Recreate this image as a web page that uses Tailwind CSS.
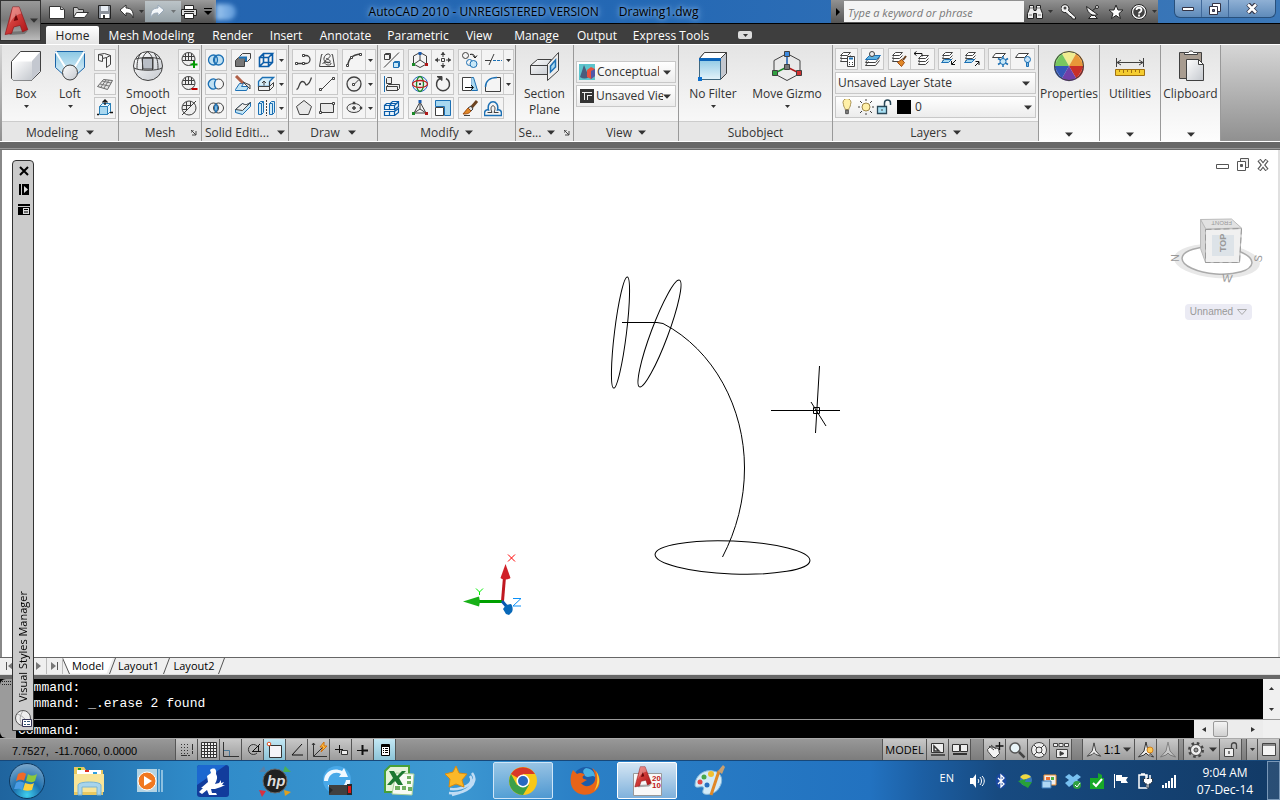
<!DOCTYPE html>
<html lang="en">
<head>
<meta charset="utf-8">
<title>AutoCAD 2010 - Drawing1.dwg</title>
<script src="https://cdn.jsdelivr.net/npm/@tailwindcss/browser@4"></script>
</head>
<body class="relative flex min-h-screen flex-col overflow-x-hidden bg-[#686868] font-['Open_Sans','Noto_Sans',sans-serif] text-[12px] leading-4 text-[#333]">

<svg class="absolute size-0" aria-hidden="true">
  <defs>
    <linearGradient id="gGlass" x1="0" y1="0" x2="0" y2="1"><stop offset="0" stop-color="#8cc8e4"/><stop offset="1" stop-color="#e4f3fa"/></linearGradient>
    <linearGradient id="gGrey" x1="0" y1="0" x2="1" y2="1"><stop offset="0" stop-color="#fff"/><stop offset="1" stop-color="#c4c8ce"/></linearGradient>
    <linearGradient id="gRed" x1="0" y1="0" x2="1" y2="1"><stop offset="0" stop-color="#f0625a"/><stop offset="1" stop-color="#a90e12"/></linearGradient>
    <radialGradient id="gOrb" cx=".5" cy=".9" r=".9"><stop offset="0" stop-color="#3fd0ee"/><stop offset=".45" stop-color="#1c6fae"/><stop offset="1" stop-color="#7fa9cc"/></radialGradient>
    <symbol id="down" viewBox="0 0 8 5"><path d="M0 .5h8L4 4.800z" fill="#333" stroke="none"/></symbol>
    <symbol id="tiny" viewBox="0 0 5 3"><path d="M0 0h5L2.500 3z" fill="#333" stroke="none"/></symbol>
    <symbol id="launch" viewBox="0 0 6 6"><path d="M0 0l5 5M5 1v4H1M1 0h2M0 1v2" fill="none" stroke="#444"/></symbol>
    <symbol id="sheets" viewBox="0 0 18 18"><path d="M5.500 2.500h7l-3 3h-7zM3.500 6.500l-1 2h7l3-3M3.500 9.500l-1 2h7l3-3" fill="#fff" stroke="#444"/></symbol>
    <symbol id="compass" viewBox="0 0 18 18"><path d="M9 1l2 9 5.500 6-5.500-2L9 12l-2 2-5.500 2L7 10z" fill="#f0f0f0" stroke="#333" stroke-linejoin="round"/></symbol>
    <symbol id="redA" viewBox="0 0 24 28"><path d="M6 24l16-1-3 3-14 1z" fill="#333" opacity=".4"/><path d="M8 1h6l8 21-5 2-2-6-6 1.500-2 6-6 1z" fill="url(#gRed)" stroke="#8d1014" stroke-width=".6"/><path d="M11 7l2 6-4 1z" fill="#6d0709"/><path d="M8 1h6l2 6C11 8 7 12 5 17z" fill="#fff" opacity=".3"/></symbol>
  </defs>
</svg>

<!-- Title bar -->
<header class="relative flex h-6 shrink-0 items-start border-b border-black bg-linear-to-r from-[#2463ae] via-[#2468b4] to-[#3c78b8]">
  <button class="absolute top-0 left-0 z-10 flex h-[41px] w-[41px] items-center border border-[#333] bg-linear-to-b from-[#999] via-[#777] to-[#bbb] pl-[3px]" aria-label="Application menu">
    <svg class="h-8 w-[26px] shrink-0"><use href="#redA"/></svg>
    <svg class="h-[5px] w-2"><use href="#down"/></svg>
  </button>
  <nav class="ml-[41px] flex h-[23px] w-[175px] shrink-0 items-center bg-linear-to-b from-[#9b9b9b] to-[#505050] pl-2 [&>button]:flex [&>button]:items-center" aria-label="Quick access">
    <button class="w-6" aria-label="New"><svg class="h-4 w-4" viewBox="0 0 16 16"><path d="M.500 2.500h11l4 3v9H.500z" fill="#fff" stroke="#333"/><path d="M11.500 2.500v3h3" fill="#ccc" stroke="#333"/></svg></button>
    <button class="w-6" aria-label="Open"><svg class="h-4 w-4" viewBox="0 0 16 16"><path d="M.500 13.500v-10h4l1 2h5v3" fill="#ccc" stroke="#333"/><path d="M.500 13.500l3-5h12l-4 5z" fill="#fff" stroke="#333"/></svg></button>
    <button class="w-[22px]" aria-label="Save"><svg class="h-4 w-4" viewBox="0 0 16 16"><path d="M1.500 1.500h12v13h-12z" fill="#8d939c" stroke="#222"/><path d="M4 2h7v5H4z" fill="#e9eef5"/><path d="M4 10h8v4H4z" fill="#fff"/><path d="M6 11h2v3H6z" fill="#333"/></svg></button>
    <button class="w-[26px]" aria-label="Undo"><svg class="h-4 w-4" viewBox="0 0 16 16"><path d="M1 6l6-5v3c5 0 8 3 7 10-1-4-3-5-7-5v3z" fill="#fff" stroke="#333"/></svg><svg class="ml-1 h-[3px] w-[5px]"><use href="#tiny"/></svg></button>
    <button class="h-[21px] w-9 bg-linear-to-b from-[#bcc4c8] to-[#94a0a6] pl-1" aria-label="Redo"><svg class="h-4 w-4" viewBox="0 0 16 16"><path d="M15 6L9 1v3C4 4 1 7 2 14c1-4 3-5 7-5v3z" fill="#f4f7fa" stroke="#98a8b8"/></svg><svg class="ml-[6px] h-[3px] w-[5px] opacity-50"><use href="#tiny"/></svg></button>
    <button class="w-[23px]" aria-label="Print"><svg class="h-4 w-4" viewBox="0 0 16 16"><path d="M3.500 1.500h9v4h-9z" fill="#fff" stroke="#222"/><path d="M.500 5.500h15v6H.500z" fill="#ddd" stroke="#222"/><path d="M3.500 9.500h9v5h-9z" fill="#fff" stroke="#222"/><path d="M3 7.500h10" stroke="#222"/></svg></button>
    <button aria-label="Customize"><svg class="h-[7px] w-2" viewBox="0 0 8 7"><path d="M0 0h8v1H0zM0 3h8L4 7z"/></svg></button>
  </nav>
  <div class="mt-1 h-4 w-5 shrink-0 rounded-r-full bg-linear-to-r from-[#9bc4ee] to-[#5c98d8] blur-[2px]"></div>
  <h1 class="flex h-[23px] flex-1 items-center justify-center gap-5 whitespace-nowrap pt-px text-[12px] text-black [text-shadow:0_0_4px_#8fbcec,0_0_8px_#8fbcec]"><span>AutoCAD 2010 - UNREGISTERED VERSION</span><span>Drawing1.dwg</span></h1>
  <div class="flex h-[23px] w-[327px] shrink-0 items-center bg-linear-to-b from-[#929292] to-[#555]">
    <button class="flex h-full w-[13px] items-center justify-center" aria-label="Collapse search"><svg class="h-2 w-1" viewBox="0 0 4 8"><path d="M0 0l4 4-4 4z"/></svg></button>
    <input aria-label="Search" class="h-[21px] w-[180px] bg-[#f4f4f4] px-1 pt-[2px] text-[11px] italic placeholder:text-[#777]" placeholder="Type a keyword or phrase">
    <div class="flex flex-1 items-center pl-[3px] [&_svg]:block">
      <button class="w-[15px]" aria-label="Find"><svg class="h-4 w-4" viewBox="0 0 16 16"><path d="M2.500 4.500V1.500h4v3l.500 2h2l.500-2v-3h4v3l2 5v5h-6v-5h-3v5H.500v-5z" fill="#eee" stroke="#222"/><path d="M2 11h3M11 11h3M3 4h3M10 4h3" stroke="#777"/></svg></button>
      <svg class="mx-[6px] h-[3px] w-[5px]"><use href="#tiny"/></svg>
      <button class="w-6 pl-[2px]" aria-label="Subscription"><svg class="h-4 w-4" viewBox="0 0 16 16"><path d="M7.500 6.500l7 6.500v2h-3l-1-2-2-1-3.500-3.500a4 4 0 1 1 2.500-2z" fill="#f4f4f4" stroke="#222"/><circle cx="4" cy="4" r="1.500" fill="#444"/></svg></button>
      <button class="w-[23px] pl-[2px]" aria-label="Communication"><svg class="h-4 w-4" viewBox="0 0 16 16"><path d="M1.500 2.500l11 8c-4 2-10 0-11-8zM7 7l5-4M3.500 14.500h9l-3-3h-3z" fill="#f4f4f4" stroke="#222"/><circle cx="12" cy="3" r="1.500" fill="#fff" stroke="#222"/></svg></button>
      <button class="w-[23px] pl-[2px]" aria-label="Favorites"><svg class="h-4 w-4" viewBox="0 0 16 16"><path d="M8 1l2 5h5l-4 3.500 1.500 5L8 11.500l-4.500 3 1.500-5L1 6h5z" fill="#fff" stroke="#222"/></svg></button>
      <button class="w-[23px] pl-[2px]" aria-label="Help"><svg class="h-4 w-4" viewBox="0 0 16 16"><circle cx="8" cy="8" r="7.500" fill="#fff" stroke="#222"/><circle cx="8" cy="8" r="5.800" fill="#444"/><path d="M5.500 6c0-3 5-3 5 0 0 2-2.500 2-2.500 3.500M8 10.500v2" fill="none" stroke="#fff" stroke-width="1.800"/></svg></button>
      <svg class="h-[3px] w-[5px]"><use href="#tiny"/></svg>
    </div>
  </div>
  <div class="ml-4 mr-1 flex h-[18px] w-[102px] shrink-0 rounded-b-md border border-t-0 border-[#28507c] bg-linear-to-b from-[#8fb0d4] to-[#5f8bba] [&>button]:flex [&>button]:items-center [&>button]:justify-center">
    <button class="w-[27px] border-r border-[#41699a]" aria-label="Minimize"><svg class="h-[6px] w-3" viewBox="0 0 12 6"><path d="M.500 1.500h11v3H.500z" fill="#fff" stroke="#334"/></svg></button>
    <button class="w-[27px] border-r border-[#41699a]" aria-label="Restore"><svg class="h-3 w-3" viewBox="0 0 12 12"><path d="M3.500.500h8v8h-8z" fill="#fff" stroke="#334"/><path d="M.500 3.500h8v8h-8z" fill="#fff" stroke="#334"/><path d="M3.500 6.500h2v2h-2z" fill="#668" stroke="#334"/></svg></button>
    <button class="flex-1" aria-label="Close"><svg class="h-[11px] w-3" viewBox="0 0 12 11"><path d="M2 1l8 9M10 1l-8 9" stroke="#334" stroke-width="4.500"/><path d="M2 1.500l8 8M10 1.500l-8 8" stroke="#fff" stroke-width="2.500"/></svg></button>
  </div>
</header>

<!-- Ribbon tabs -->
<nav class="flex h-5 shrink-0 items-end bg-[#3e3e3e] pl-[46px] text-[12px] text-white [&>a]:flex [&>a]:h-[18px] [&>a]:items-center [&>a]:justify-center [&>a]:pt-[2px] [&>a]:whitespace-nowrap" aria-label="Ribbon tabs">
  <a href="#" class="w-[53px] rounded-t-xs bg-linear-to-b from-white to-[#e4e4e4] text-[#222]">Home</a>
  <a href="#" class="w-[105px]">Mesh Modeling</a>
  <a href="#" class="w-[57px]">Render</a>
  <a href="#" class="w-[50px]">Insert</a>
  <a href="#" class="w-[69px]">Annotate</a>
  <a href="#" class="w-[76px]">Parametric</a>
  <a href="#" class="w-[46px]">View</a>
  <a href="#" class="w-[69px]">Manage</a>
  <a href="#" class="w-[52px]">Output</a>
  <a href="#" class="w-[96px]">Express Tools</a>
  <button class="mb-[5px] ml-[19px] flex h-2 w-[14px] items-center justify-center rounded-xs bg-[#ddd]" aria-label="Minimize ribbon"><svg class="h-[3px] w-[5px]"><use href="#tiny"/></svg></button>
</nav>

<!-- Ribbon panels -->
<main class="flex h-[98px] shrink-0 border-y border-white bg-linear-to-b from-[#d6d6d6] to-[#909090] fill-none pl-[2px] stroke-[#404040] [&_button]:shrink-0 [&_h2]:flex [&_h2]:h-5 [&_h2]:items-center [&_h2]:justify-center [&_h2]:border-t [&_h2]:border-[#ccc] [&_h2]:bg-[#e6e6e6] [&_h2]:pt-[2px] [&_h2]:whitespace-nowrap [&>section]:flex [&>section]:shrink-0 [&>section]:flex-col [&>section]:border-r [&>section]:border-[#999] [&>section]:bg-linear-to-b [&>section]:from-[#e4e4e4] [&>section]:to-[#fdfdfd]">

  <section class="w-[117px]">
    <div class="flex flex-1 pt-1">
      <button class="flex w-12 flex-col items-center"><svg class="mt-px h-8 w-8" viewBox="0 0 32 32"><path d="M1.500 11.500l9-10h20v20l-9 9h-18l-2-2z" fill="#fff"/><path d="M2 11.500h20v18l-1 1H3.500L2 29z" fill="url(#gGrey)" stroke="none"/><path d="M22 11l8-9v19l-8 9z" fill="#c4c8d0" stroke="none"/></svg><span class="mt-1">Box</span><svg class="mt-[3px] h-[3px] w-[5px]"><use href="#tiny"/></svg></button>
      <button class="flex w-10 flex-col items-center"><svg class="mt-px h-8 w-8" viewBox="0 0 32 32"><path d="M1.500 1.500h29v16l-10 9h-9l-10-9z" fill="url(#gGlass)" stroke="#1a64a8"/><path d="M1.500 1.500l10 16M30.500 1.500l-10 16" stroke="#fff" stroke-width="2"/><circle cx="16" cy="22.500" r="7.500" fill="url(#gGrey)"/></svg><span class="mt-1">Loft</span><svg class="mt-[3px] h-[3px] w-[5px]"><use href="#tiny"/></svg></button>
      <div class="ml-1 flex flex-col gap-[2px] [&>button]:flex [&>button]:size-[22px] [&>button]:items-center [&>button]:justify-center [&>button]:border [&>button]:border-[#c8c8c8] [&>button]:bg-[#f4f4f4] [&_svg]:size-[18px]">
        <button aria-label="Polysolid"><svg viewBox="0 0 18 18"><path d="M2.500 3.500l6-1 6 2v9l-4 3v-10l-4 1v3l-4-1z" fill="#f4f4f4"/><path d="M6.500 7.500v-3l-4-1M10.500 6.500l4-2"/></svg></button>
        <button aria-label="Planar surface"><svg viewBox="0 0 18 18"><path d="M1.500 11.500l6-7 9 1-5 9z" fill="#e4e4e4" stroke="#666"/><path d="M4 9l9 2M6 6l9 2M10 5l-5 7M13 5l-5 8" stroke="#777"/></svg></button>
        <button aria-label="Presspull"><svg viewBox="0 0 18 18"><path d="M3.500 7.500h8v8h-8z" fill="#a9d8f0" stroke="#2a80b8"/><path d="M3.500 7.500l3-3h8l-3 3zM11.500 7.500l3-3v8l-3 3z" fill="#e4f4fc" stroke="#2a80b8"/><path d="M9 6V1M6.500 3.500L9 1l2.500 2.500M1 15.500h2M14 13.500h3" stroke="#111" stroke-width="1.300"/></svg></button>
      </div>
    </div>
    <h2>Modeling<svg class="ml-2 h-[5px] w-2"><use href="#down"/></svg></h2>
  </section>

  <section class="w-[83px]">
    <div class="flex flex-1 pt-1">
      <button class="flex w-[58px] flex-col items-center"><svg class="mt-px h-8 w-8" viewBox="0 0 32 32"><circle cx="16" cy="16" r="14.500" fill="url(#gGrey)"/><path d="M2 18c5 3 23 3 28 0M4 9c6-2 18-2 24 0" fill="none"/><path d="M10 8h11v11H11z" fill="#b9bec6"/><path d="M10.500 20V9c1-4 3-6 5-7 2 1 4 3 5 7v11M22 3c4 5 4 12 4 16M9 3c-4 5-4 12-4 16M11 8h10"/></svg><span class="mt-1">Smooth Object</span></button>
      <div class="ml-[1px] flex flex-col gap-[2px] [&>button]:flex [&>button]:size-[22px] [&>button]:items-center [&>button]:justify-center [&>button]:border [&>button]:border-[#c8c8c8] [&>button]:bg-[#f4f4f4] [&_svg]:size-[18px]">
        <button aria-label="Smooth more"><svg viewBox="0 0 18 18"><circle cx="8.500" cy="8" r="6.500" fill="#eee"/><path d="M3 5.500h11M2.500 9.500h12M5.500 2.500v7M11.500 2.500v7M8.500 1.500v8"/><path d="M14 10v7M10.500 13.500h7" stroke="#009a00" stroke-width="2"/></svg></button>
        <button aria-label="Smooth less"><svg viewBox="0 0 18 18"><circle cx="8.500" cy="8" r="6.500" fill="#eee"/><path d="M3 5.500h11M2.500 9.500h12M5.500 2.500v7M11.500 2.500v7M8.500 1.500v8"/><path d="M11.500 14h6" stroke="#c00000" stroke-width="2"/></svg></button>
        <button aria-label="Refine mesh"><svg viewBox="0 0 18 18"><circle cx="9" cy="9" r="7" fill="#eee"/><path d="M2 16L16 2M3 6.500h8M2.500 10.500h5M6.500 3v9M10.500 2v5"/></svg></button>
      </div>
    </div>
    <h2 class="relative">Mesh<svg class="absolute right-[4px] size-[6px]"><use href="#launch"/></svg></h2>
  </section>

  <section class="w-[87px]">
    <div class="flex flex-1 gap-1 px-[3px] pt-1 [&_button]:flex [&_button]:items-center [&_button]:justify-center">
      <div class="flex flex-col gap-[2px] [&>button]:size-[22px] [&>button]:border [&>button]:border-[#c8c8c8] [&>button]:bg-[#f4f4f4] [&_svg]:size-[18px]">
        <button aria-label="Union"><svg viewBox="0 0 18 18"><g fill="#bfe0f2" stroke="#1c70b4" stroke-width="1.300"><circle cx="6.500" cy="9" r="5"/><circle cx="11.500" cy="9" r="5"/><path d="M9 5c2 2 2 6 0 8-2-2-2-6 0-8z"/></g></svg></button>
        <button aria-label="Subtract"><svg viewBox="0 0 18 18"><circle cx="11.500" cy="9" r="5"/><path d="M9 4.700a5 5 0 1 0 0 8.600c-2-2-2-6 0-8.600z" fill="#bfe0f2" stroke="#1c70b4" stroke-width="1.300"/></svg></button>
        <button aria-label="Intersect"><svg viewBox="0 0 18 18"><circle cx="6.500" cy="9" r="5"/><circle cx="11.500" cy="9" r="5"/><path d="M9 5c2 2 2 6 0 8-2-2-2-6 0-8z" fill="#9fd0ec" stroke="#1c70b4" stroke-width="1.300"/></svg></button>
      </div>
      <div class="flex flex-col gap-[2px] [&>div]:flex [&>div]:h-[22px] [&>div]:border [&>div]:border-[#c8c8c8] [&>div]:bg-[#f4f4f4] [&_button]:w-[22px] [&_button+button]:border-l [&_button+button]:border-[#ccc] [&_button:nth-child(3)]:w-[10px]">
        <div><button aria-label="Extrude faces"><svg class="size-[18px]" viewBox="0 0 18 18"><path d="M5.500 5.500l3-3h8v5l-3 3h-3" fill="#eee"/><path d="M1.500 9.500l3-3h8l-2 3v6h-9z" fill="#777"/><path d="M5 6.500h7v4" stroke="#1c70b4" stroke-width="2"/></svg></button><button aria-label="Extract edges"><svg class="size-[18px]" viewBox="0 0 18 18"><path d="M2.500 6.500h9v9h-9zM2.500 6.500l4-4h9l-4 4M15.500 2.500v9l-4 4M6.500 3v8.500h9M6.500 11.500l-4 4" stroke="#0a5ca8" stroke-width="1.600"/></svg></button><button aria-label="More faces"><svg class="h-[3px] w-[5px]"><use href="#tiny"/></svg></button></div>
        <div><button aria-label="Slice"><svg class="size-[18px]" viewBox="0 0 18 18"><path d="M1.500 14.500l4-6h4l-2 3h7l-2 4h-11z" fill="#bfe4f6" stroke="#1c70b4"/><path d="M2 1l7 7" stroke="#b06048" stroke-width="3"/><path d="M9 7l7 7v-4z" fill="#ddd" stroke="#444"/></svg></button><button aria-label="Offset faces"><svg class="size-[18px]" viewBox="0 0 18 18"><path d="M1.500 6.500l4-4h11l-4 4v5h-11z" fill="#d8eef8" stroke="#1c70b4" stroke-width="1.300"/><path d="M1.500 11.500h11l4-4v4l-4 4h-11z" fill="#eee"/><path d="M12.500 6.500v9M7 10.500V6M5 8l2-2 2 2"/></svg></button><button aria-label="More edges"><svg class="h-[3px] w-[5px]"><use href="#tiny"/></svg></button></div>
        <div><button aria-label="Thicken"><svg class="size-[18px]" viewBox="0 0 18 18"><path d="M1.500 10.500l7-6c3 2 5 1 8-1v4l-8 8-7-2z" fill="#bfe4f6" stroke="#1c70b4"/><path d="M1.500 10.500l7-6c3 2 5 1 8-1l-8 8z" fill="#eee"/></svg></button><button aria-label="Separate"><svg class="size-[18px]" viewBox="0 0 18 18"><path d="M1.500 4.500l2-2h3v11l-2 2h-3zM1.500 4.500h3v11M4.500 4.500l2-2M12.500 4.500l2-2h3v11l-2 2h-3zM12.500 4.500h3v11" fill="#d4ecf8" stroke="#1c70b4"/><path d="M9.500 1v16" stroke-dasharray="2 1"/></svg></button><button aria-label="More bodies"><svg class="h-[3px] w-[5px]"><use href="#tiny"/></svg></button></div>
      </div>
    </div>
    <h2>Solid Editi...<svg class="ml-2 h-[5px] w-2"><use href="#down"/></svg></h2>
  </section>

  <section class="w-[89px]">
    <div class="flex flex-1 gap-1 px-[3px] pt-1 [&_button]:flex [&_button]:items-center [&_button]:justify-center [&_button]:w-[22px] [&>div]:flex [&>div]:flex-col [&>div]:gap-[2px] [&>div>div]:flex [&>div>div]:h-[22px] [&>div>div]:border [&>div>div]:border-[#c8c8c8] [&>div>div]:bg-[#f4f4f4] [&_button+button]:border-l [&_button+button]:border-[#ccc]">
      <div>
        <div><button aria-label="Polyline"><svg class="size-[18px]" viewBox="0 0 18 18"><path d="M2 12.500h9a4 4 0 0 0 0-8H8" stroke-width="1.300"/><path d="M.500 11.500h2v2h-2zM7.500 11.500h2v2h-2zM7.500 3.500h2v2h-2z" fill="#fff"/></svg></button><button aria-label="Helix"><svg class="size-[18px]" viewBox="0 0 18 18"><path d="M4.500 3.500h-1l-2 12h15l-2-12h-1"/><path d="M5 13c-1-3 9-2 8 0s-8 1-6-3c2-3 6-1 5 1s-7 0-6-4 5-5 6-3-3 5-4 3"/></svg></button></div>
        <div><button aria-label="Spline"><svg class="size-[18px]" viewBox="0 0 18 18"><path d="M1.500 14.500c3 0 2-8 6-8s2 5 5 3 3-5 4-7" stroke-width="1.300"/></svg></button><button aria-label="Line"><svg class="size-[18px]" viewBox="0 0 18 18"><path d="M2.500 15.500l13-13"/><path d="M1.500 13.500h2v2h-2zM14.500 2.500h2v2h-2z" fill="#fff"/></svg></button></div>
        <div><button aria-label="Polygon"><svg class="size-[18px]" viewBox="0 0 18 18"><path d="M9 1.500l7.500 6-3 8h-9l-3-8z" fill="#e8e8e8"/></svg></button><button aria-label="Rectangle"><svg class="size-[18px]" viewBox="0 0 18 18"><path d="M2.500 4.500h13v9h-13z" fill="#e8e8e8"/><path d="M1.500 12.500h2v2h-2zM14.500 3.500h2v2h-2z" fill="#fff"/></svg></button></div>
      </div>
      <div class="[&_button:nth-child(2)]:w-[10px]">
        <div><button aria-label="Arc"><svg class="size-[18px]" viewBox="0 0 18 18"><path d="M2.500 15c1-7 4-11 13-12" stroke-width="1.300"/><path d="M1.500 13.500h2v2h-2zM5.500 5.500h2v2h-2zM14.500 2.500h2v2h-2z" fill="#fff"/></svg></button><button aria-label="More arcs"><svg class="h-[3px] w-[5px]"><use href="#tiny"/></svg></button></div>
        <div><button aria-label="Circle"><svg class="size-[18px]" viewBox="0 0 18 18"><circle cx="9" cy="9" r="7" fill="#eee" stroke-width="1.300"/><path d="M9 9.500l4.500-4.500"/><path d="M7.500 8.500h2v2h-2z" fill="#fff"/></svg></button><button aria-label="More circles"><svg class="h-[3px] w-[5px]"><use href="#tiny"/></svg></button></div>
        <div><button aria-label="Ellipse"><svg class="size-[18px]" viewBox="0 0 18 18"><ellipse cx="9" cy="9" rx="7" ry="4.500" fill="#eee"/><path d="M15.500 8.500h1v1h-1zM8.500 3.500h1v1h-1zM7 9h4M9 7v4" stroke-width="1.500"/></svg></button><button aria-label="More ellipses"><svg class="h-[3px] w-[5px]"><use href="#tiny"/></svg></button></div>
      </div>
    </div>
    <h2>Draw<svg class="ml-2 h-[5px] w-2"><use href="#down"/></svg></h2>
  </section>

  <section class="w-[138px]">
    <div class="flex flex-1 gap-1 px-[2px] pt-1 [&_button]:flex [&_button]:items-center [&_button]:justify-center [&_button]:w-[22px] [&>div]:flex [&>div]:flex-col [&>div]:items-start [&>div]:gap-[2px] [&>div>div]:flex [&>div>div]:h-[22px] [&>div>div]:border [&>div>div]:border-[#c8c8c8] [&>div>div]:bg-[#f4f4f4] [&_button+button]:border-l [&_button+button]:border-[#ccc] [&_button:nth-child(3)]:w-[10px]">
      <div class="[&_button]:w-5">
        <div><button aria-label="3D mirror"><svg class="size-[18px]" viewBox="0 0 18 18"><path d="M1.500 3.500l1-1h5v5l-1 1h-5zM1.500 3.500h5v5"/><path d="M1 16.500L16 1.500"/><path d="M10.500 11.500l1-1h5v5l-1 1h-5zM10.500 11.500h5v5" fill="#c8e8f8" stroke="#1c70b4"/></svg></button></div>
        <div><button aria-label="3D align"><svg class="size-[18px]" viewBox="0 0 18 18"><path d="M1.500 1v16" stroke="#1c70b4"/><path d="M3.500 3.500l1-1h4v6h-5zM3.500 11.500l2-2h11v4l-2 2h-11zM3.500 11.500h11v4" fill="#eee"/></svg></button></div>
        <div><button aria-label="3D array"><svg class="size-[18px]" viewBox="0 0 18 18"><path d="M1.500 6.500h5v4h-5zM6.500 6.500h5v4h-5zM1.500 12.500h5v4h-5zM6.500 12.500h5v4h-5zM1.500 6.500l2-2h4l2-2h6v5l-4 3M6.500 6.500l2-2h4M11.500 6.500l4-4M11.500 12.500l4-3v4l-4 3M11.500 12.500l1-2" fill="#e8f4fc" stroke="#0a5ca8" stroke-width="1.200"/></svg></button></div>
      </div>
      <div>
        <div><button aria-label="3D move"><svg class="size-[18px]" viewBox="0 0 18 18"><path d="M9 1.500l6.500 3.500v8L9 16.500 2.500 13V5zM9 2v7M9 9l-6 4M9 9l6 4"/><g stroke="none"><path d="M7.500 1h3v3h-3z" fill="#1a5cb0"/><path d="M1 12h3v3H1z" fill="#1a8a28"/><path d="M14 12h3v3h-3z" fill="#b01818"/></g></svg></button><button aria-label="Move"><svg class="size-[18px]" viewBox="0 0 18 18"><path d="M9 1v5M9 12v5M1 9h5M12 9h5M7.500 7.500h3v3h-3z"/><path d="M6.500 4L9 1l2.500 3zM6.500 14L9 17l2.500-3zM4 6.500L1 9l3 2.500zM14 6.500L17 9l-3 2.500z" fill="#404040" stroke="none"/></svg></button></div>
        <div><button aria-label="3D rotate"><svg class="size-[18px]" viewBox="0 0 18 18"><circle cx="9" cy="9" r="7.500" stroke="#2a68c8" fill="#eee"/><ellipse cx="9" cy="9" rx="3.500" ry="7.500" stroke="#1a8a28" stroke-width="1.300"/><ellipse cx="9" cy="9" rx="7.500" ry="3.500" stroke="#c02020" stroke-width="1.300"/><path d="M8 8h2v2H8z" fill="#444" stroke="none"/></svg></button><button aria-label="Rotate"><svg class="size-[18px]" viewBox="0 0 18 18"><path d="M12 3.500a6.500 6.500 0 1 1-6 0" stroke-width="1.500"/><path d="M3 1.500h5v4z" fill="#404040"/></svg></button></div>
        <div><button aria-label="3D scale"><svg class="size-[18px]" viewBox="0 0 18 18"><path d="M9 3L3 14h12zM9 3v7M9 10l-6 4M9 10l6 4"/><g stroke="none"><path d="M7.500 1h3v3h-3z" fill="#1a5cb0"/><path d="M1 13h3v3H1z" fill="#1a8a28"/><path d="M14 13h3v3h-3z" fill="#b01818"/></g></svg></button><button aria-label="Scale"><svg class="size-[18px]" viewBox="0 0 18 18"><path d="M1.500 1.500h15v15h-6v-9h-9z" fill="#a8d8f0" stroke="#1c70b4"/><path d="M1.500 8.500h8v8h-8z" fill="#fff"/></svg></button></div>
      </div>
      <div>
        <div><button aria-label="Copy"><svg class="size-[18px]" viewBox="0 0 18 18"><circle cx="4.500" cy="4.500" r="3"/><circle cx="8.500" cy="11.500" r="3" stroke="#1c70b4"/><circle cx="12.500" cy="13" r="3.500" fill="#c8e8f8" stroke="#1c70b4"/><path d="M9 3.500c3-1 5 1 5 3M12 4.500l2 2.500 2-2.500" stroke="#111"/></svg></button><button aria-label="Trim"><svg class="size-[18px]" viewBox="0 0 18 18"><path d="M1 9.500h6M5 14L10 3"/><path d="M9 9.500h9" stroke="#1c70b4" stroke-dasharray="3 1"/></svg></button><button aria-label="More trim"><svg class="h-[3px] w-[5px]"><use href="#tiny"/></svg></button></div>
        <div><button aria-label="Stretch"><svg class="size-[18px]" viewBox="0 0 18 18"><path d="M10.500 2.500h2l4 13h-6z" fill="#a8d8f0" stroke="#1c70b4"/><path d="M10.500 15.500h-9v-13h9" fill="#fff"/><path d="M4 12.500h8M10 10l2.500 2.500L10 15" stroke="#111"/></svg></button><button aria-label="Fillet"><svg class="size-[18px]" viewBox="0 0 18 18"><path d="M1.500 11v5.500h15v-14H13" fill="none"/><path d="M1.500 12C1.500 6 6 2.500 13 2.500" stroke="#1c70b4" stroke-width="1.500"/></svg></button><button aria-label="More corners"><svg class="h-[3px] w-[5px]"><use href="#tiny"/></svg></button></div>
        <div><button aria-label="Erase"><svg class="size-[18px]" viewBox="0 0 18 18"><path d="M16 2l-6 7" stroke="#6b4220" stroke-width="3"/><path d="M10 7l2 3-2 2-3-3z" fill="#ddd"/><path d="M7 9l3 3c-2 3-5 3-8 3z" fill="#e08828" stroke="#a04c10"/><path d="M3 16.500h6"/></svg></button><button aria-label="Offset"><svg class="size-[18px]" viewBox="0 0 18 18"><path d="M.500 16.500h17v-2c0-3-2-4-4-3.500C16 0 2 0 4.500 11c-2-.500-4 .500-4 3.500z" stroke="#1c70b4" stroke-width="1.500"/><path d="M3.500 13.500H8c-4-9 6-9 2 0h4.500"/></svg></button></div>
      </div>
    </div>
    <h2>Modify<svg class="ml-[6px] h-[5px] w-2"><use href="#down"/></svg></h2>
  </section>

  <section class="w-[58px]">
    <div class="flex flex-1 justify-center pt-1">
      <button class="flex w-12 flex-col items-center"><svg class="mt-px h-8 w-8" viewBox="0 0 32 32"><path d="M1.500 15.500l7-6h14l-4 6v9h-17z" fill="url(#gGrey)"/><path d="M1.500 15.500h18"/><path d="M18.500 14.500l11-12v18l-11 10z" fill="#eee"/><path d="M21.500 16l5-6v7l-5 5z" fill="#a8d8f0" stroke="#1c70b4" stroke-width="1.500"/></svg><span class="mt-1">Section Plane</span></button>
    </div>
    <h2 class="gap-[6px]">Se...<svg class="h-[5px] w-2"><use href="#down"/></svg><svg class="ml-[3px] size-[6px]"><use href="#launch"/></svg></h2>
  </section>

  <section class="w-[105px]">
    <div class="flex flex-1 flex-col gap-[2px] px-[2px] pt-4 [&>label]:flex [&>label]:h-[22px] [&>label]:items-center [&>label]:border [&>label]:border-[#c8c8c8] [&>label]:bg-linear-to-b [&>label]:from-white [&>label]:to-[#ececec] [&>label]:px-[2px] [&_select]:w-0 [&_select]:flex-1 [&_select]:appearance-none [&_select]:overflow-hidden [&_svg]:shrink-0">
      <label><svg class="size-4" viewBox="0 0 16 16" stroke="none"><path d="M0 0h16v16H0z" fill="#5cc4cc"/><path d="M5 1l5 12c-3 2-6 2-9 0z" fill="#4a5c7c"/><path d="M8 6l4-3 4 2v7l-4 3-4-2z" fill="#e8503c"/><path d="M12 7l4-2v7l-4 3z" fill="#5058a8"/></svg><select class="ml-[2px]" aria-label="Visual style"><option>Conceptual</option></select><svg class="mr-[2px] ml-1 h-[5px] w-2"><use href="#down"/></svg></label>
      <label><svg class="ml-[1px] size-[14px]" viewBox="0 0 14 14" stroke="none"><path d="M0 0h14v14H0z" fill="#333"/><path d="M2 3h10v1H5v7H4V4H2zM7 6h5v1H8v4H7z" fill="#eee"/></svg><select class="ml-[2px]" aria-label="View"><option>Unsaved Vie</option></select><svg class="mr-[2px] h-[5px] w-2"><use href="#down"/></svg></label>
    </div>
    <h2>View<svg class="ml-[6px] h-[5px] w-2"><use href="#down"/></svg></h2>
  </section>

  <section class="w-[154px]">
    <div class="flex flex-1 pt-1">
      <button class="flex w-[68px] flex-col items-center"><svg class="mt-px h-8 w-8" viewBox="0 0 32 32"><path d="M2.500 8.500l5-6h22v21l-6 6h-21z" fill="#c4c8cf"/><path d="M2.500 8.500l5-6h22l-6 6z" fill="#fff"/><path d="M2.500 8.500h21v21h-21z" fill="url(#gGlass)" stroke="#406880"/><path d="M2 9.500h22" stroke="#0c64b8" stroke-width="3"/><path d="M1 27h4v4H1z" fill="#0c70d0" stroke="none"/></svg><span class="mt-1">No Filter</span><svg class="mt-[3px] h-[3px] w-[5px]"><use href="#tiny"/></svg></button>
      <button class="flex w-20 flex-col items-center"><svg class="mt-px h-8 w-8" viewBox="0 0 32 32"><path d="M16 3.500l13 7v13l-13 7-13-7v-13z"/><path d="M16 3v14" stroke="#1a5cb0" stroke-width="1.500"/><path d="M16 17L4 23" stroke="#1a8a28" stroke-width="1.500"/><path d="M16 17l12 6" stroke="#b01818" stroke-width="1.500"/><path d="M13.500 1.500h5v5h-5z" fill="#3c8ae0"/><path d="M1.500 20.500h5v5h-5z" fill="#30a040"/><path d="M25.500 20.500h5v5h-5z" fill="#d03030"/><path d="M13.500 14.500h5v5h-5z" fill="#777"/></svg><span class="mt-1 whitespace-nowrap">Move Gizmo</span><svg class="mt-[3px] h-[3px] w-[5px]"><use href="#tiny"/></svg></button>
    </div>
    <h2>Subobject</h2>
  </section>

  <section class="w-[206px]">
    <div class="flex flex-1 flex-col gap-[2px] px-[2px] pt-[3px]">
      <div class="flex justify-between pr-[1px] [&>div]:flex [&>div]:h-[22px] [&>div]:border [&>div]:border-[#c8c8c8] [&>div]:bg-[#f4f4f4] [&_button]:flex [&_button]:w-[21px] [&_button]:items-center [&_button]:justify-center [&_button+button]:w-6 [&_button+button]:border-l [&_button+button]:border-[#ccc] [&_svg]:size-[18px]">
        <div><button aria-label="Layer properties"><svg viewBox="0 0 18 18"><use href="#sheets"/><path d="M9.500 6.500h7v10h-7z" fill="#fff"/><path d="M11 8.500h4" stroke="#1c70b4" stroke-width="2"/><path d="M11 12.500h1M14 12.500h1M11 14.500h1M14 14.500h1"/></svg></button></div>
        <div><button aria-label="Make current"><svg viewBox="0 0 18 18"><path d="M4.500 11.500l-3 4h10l4-5M4.500 8.500l-3 4h10l4-5" fill="#fff"/><path d="M1.500 9.500l4-4h11l-4 4z" fill="#5cb0e0" stroke="#1c70b4"/><circle cx="8" cy="4" r="2.500" fill="#eee"/></svg></button></div>
        <div><button aria-label="Match layer"><svg viewBox="0 0 18 18"><use href="#sheets"/><path d="M16 6l-3 4" stroke="#6b4220" stroke-width="2"/><path d="M7.500 12.500l4-3 3 3-3 4z" fill="#e08828" stroke="#a04c10"/></svg></button><button aria-label="Layer previous"><svg viewBox="0 0 18 18"><use href="#sheets" x="3" y="3"/><path d="M9 6.500V3.500H1M3.500 1.500L1 3.500l2.500 2" stroke="#111"/></svg></button></div>
        <div><button aria-label="Isolate"><svg viewBox="0 0 18 18"><use href="#sheets"/><path d="M1.500 12.500l3-3h7l-3 3z" fill="#a8d8f0" stroke="#1c70b4"/><path d="M16 10l-4 4M11.500 11v3.500H15" stroke="#111"/></svg></button><button aria-label="Unisolate"><svg viewBox="0 0 18 18"><use href="#sheets"/><path d="M1.500 12.500l3-3h7l-3 3z" fill="#a8d8f0" stroke="#1c70b4"/><path d="M12 16l4-4M12.500 11.500H16V15" stroke="#111"/></svg></button></div>
        <div><button aria-label="Freeze"><svg viewBox="0 0 18 18"><path d="M4.500 3.500h10l-4 4h-9z" fill="#fff"/><path d="M12 6v11M7 8.500l10 6M17 8.500l-10 6" stroke="#1c70b4" stroke-width="1.500"/><circle cx="12" cy="11.500" r="3" fill="#c8e8f8" stroke="#1c70b4"/></svg></button><button aria-label="Layer off"><svg viewBox="0 0 18 18"><path d="M4.500 3.500h10l-4 4h-9z" fill="#fff"/><circle cx="13.500" cy="9.500" r="3" fill="#c8e4fa" stroke="#1c70b4"/><path d="M12.500 12.500h2v4h-2z" fill="#7ab4e0" stroke="#1c70b4"/></svg></button></div>
      </div>
      <label class="flex h-[22px] items-center border border-[#c8c8c8] bg-linear-to-b from-white to-[#ececec] px-[2px]"><select class="w-0 flex-1 appearance-none" aria-label="Layer state"><option>Unsaved Layer State</option></select><svg class="mr-[3px] h-[5px] w-2"><use href="#down"/></svg></label>
      <label class="flex h-[22px] items-center border border-[#c8c8c8] bg-linear-to-b from-white to-[#ececec] px-[2px]">
        <svg class="ml-px h-4 w-4" viewBox="0 0 16 18"><path d="M4 6a4.500 4.500 0 1 1 8 0c0 3-2 4-2 6H6c0-2-2-3-2-6z" fill="#fff0a8" stroke="#a08848"/><path d="M6.500 12.500h3v4h-3z" fill="#888"/></svg>
        <svg class="ml-[3px] size-4" viewBox="0 0 16 16"><path d="M8 0v2M8 14v2M0 8h2M14 8h2M2 2l2 2M14 2l-2 2M2 14l2-2M14 14l-2-2"/><circle cx="8" cy="8" r="4" fill="#fff0a8" stroke="#a08848"/></svg>
        <svg class="ml-[2px] h-4 w-4" viewBox="0 0 16 16"><path d="M1.500 7.500h9v7h-9z" fill="#a8e0f4" stroke="#2a4858" stroke-width="1.300"/><path d="M8.500 7V4c0-4 6-4 6 0v2" stroke="#2a4858" stroke-width="1.500"/><path d="M6 10v2"/></svg>
        <span class="ml-[5px] size-[14px] bg-black"></span>
        <select class="ml-1 w-0 flex-1 appearance-none" aria-label="Current layer"><option>0</option></select><svg class="mr-[1px] h-[5px] w-2"><use href="#down"/></svg>
      </label>
    </div>
    <h2>Layers<svg class="ml-[6px] h-[5px] w-2"><use href="#down"/></svg></h2>
  </section>

  <section class="w-[61px]"><button class="flex flex-1 flex-col items-center pt-1"><svg class="mt-px size-8" viewBox="0 0 32 32"><g stroke="none"><path d="M16 16L8.500 3h15z" fill="#f0ec90"/><path d="M16 16l7.500-13L31 16z" fill="#e89838"/><path d="M16 16h15l-7.500 13z" fill="#c83028"/><path d="M16 16l7.500 13h-15z" fill="#7040a8"/><path d="M16 16L8.500 29 1 16z" fill="#3458b8"/><path d="M16 16H1L8.500 3z" fill="#78c860"/><path d="M8.500 3a15 15 0 0 1 15 0z" fill="#f0ec90"/><path d="M23.500 3A15 15 0 0 1 31 16z" fill="#e89838"/><path d="M31 16a15 15 0 0 1-7.500 13z" fill="#c83028"/><path d="M23.500 29a15 15 0 0 1-15 0z" fill="#7040a8"/><path d="M8.500 29A15 15 0 0 1 1 16z" fill="#3458b8"/><path d="M1 16A15 15 0 0 1 8.500 3z" fill="#78c860"/></g><circle cx="16" cy="16" r="14.500"/></svg><span class="mt-1">Properties</span><svg class="mt-auto mb-1 h-[5px] w-2"><use href="#down"/></svg></button></section>
  <section class="w-[61px]"><button class="flex flex-1 flex-col items-center pt-1"><svg class="mt-px size-8" viewBox="0 0 32 32"><path d="M2.500 8v9M29.500 8v9M3 12.500h26M7 10l-4 2.500L7 15M25 10l4 2.500-4 2.500"/><path d="M1.500 19.500h29v6h-29z" fill="#f4cc30" stroke="#a07010"/><path d="M5.500 20v2M9.500 20v3M13.500 20v2M17.500 20v3M21.500 20v2M25.500 20v3" stroke="#a07010"/></svg><span class="mt-1">Utilities</span><svg class="mt-auto mb-1 h-[5px] w-2"><use href="#down"/></svg></button></section>
  <section class="w-[60px]"><button class="flex flex-1 flex-col items-center pt-1"><svg class="mt-px size-8" viewBox="0 0 32 32"><path d="M4.500 2.500h22v26h-22z" fill="#a89c90"/><path d="M9.500 4.500v-2h4c1-2 4-2 5 0h4v2z" fill="#fff"/><path d="M11.500 9.500h12l5 5v16h-17z" fill="url(#gGrey)"/><path d="M23.500 9.500v5h5z" fill="#fff"/></svg><span class="mt-1">Clipboard</span><svg class="mt-auto mb-1 h-[5px] w-2"><use href="#down"/></svg></button></section>
</main>
<div class="h-[6px] shrink-0 bg-[#686868]"></div>
<div class="h-[2px] shrink-0 border-b border-[#6c6c6c] bg-[#999]"></div>

<!-- Drawing area -->
<div class="relative min-h-[507px] flex-1 border-r-2 border-l-2 border-r-[#e0e0e0] border-l-[#888] bg-white">
  <svg class="absolute inset-0 h-full w-full" viewBox="2 150 1276 507" fill="none" stroke="#000" role="img" aria-label="Lamp wireframe">
    <ellipse cx="620.500" cy="332.500" rx="6" ry="56" transform="rotate(7 620.500 332.500)"/>
    <ellipse cx="659.500" cy="333.500" rx="8.500" ry="57" transform="rotate(20.500 659.500 333.500)"/>
    <path d="M622 322.500h35l6 1C714 350 744.500 408 744.500 468c0 32-8 62-22 89"/>
    <ellipse cx="732.500" cy="557.500" rx="77.500" ry="16.500" transform="rotate(2.300 732.500 557.500)"/>
    <path d="M771 410.500h69M819.500 366l-4 67M811 402l15 24M813.500 407.500h6v6h-6z"/>
    <path d="M502.500 601l2-24" stroke="#c01820" stroke-width="3"/><path d="M505.500 564l5 14c-3 2-7 2-10 0z" fill="#d02028" stroke="none"/>
    <path d="M502 601.500h-24" stroke="#00a000" stroke-width="3"/><path d="M463 601.500l16-5c1 3 1 7 0 10z" fill="#18b018" stroke="none"/>
    <path d="M502 601l5 6" stroke="#0858b0" stroke-width="3"/><path d="M503 609l3-4 5-1c2 3 2 6 1 8l-3 3-3-1z" fill="#0868b8" stroke="none"/>
    <path d="M508 554.500l7 7M515 554.500l-7 7" stroke="#f00"/><path d="M476 588.500l3.500 3.500 3.500-3.500M479.500 592v3" stroke="#0e0"/><path d="M513 598.500h8l-8 7.500h8" stroke="#0a90f8"/>
  </svg>
  <div class="absolute top-2 right-[9px] flex items-center gap-2">
    <button aria-label="Minimize drawing"><svg class="h-3 w-[13px]" viewBox="0 0 13 12"><path d="M.500 5.500h12v4H.500z" fill="#fff" stroke="#555"/></svg></button>
    <button aria-label="Restore drawing"><svg class="h-[13px] w-3" viewBox="0 0 12 13"><path d="M3.500.500h8v9h-8z" fill="#eee" stroke="#555"/><path d="M.500 3.500h8v9h-8z" fill="#fff" stroke="#555"/><path d="M3.500 6.500h2v2h-2z" fill="#555" stroke="#555"/></svg></button>
    <button aria-label="Close drawing"><svg class="h-3 w-3" viewBox="0 0 12 12"><path d="M2 1l8 10M10 1l-8 10" stroke="#555" stroke-width="4"/><path d="M2.500 1.500l7 9M9.500 1.500l-7 9" stroke="#fff" stroke-width="1.800"/></svg></button>
  </div>
  <div class="absolute top-[66px] right-[14px] w-24">
    <svg class="h-[72px] w-24" viewBox="1168 216 96 72" fill="none" stroke="#bbb">
      <ellipse cx="1217" cy="261" rx="43" ry="17" fill="#e8e8e8" stroke="none" transform="rotate(4 1217 261)"/>
      <ellipse cx="1217" cy="260.500" rx="35" ry="13.500" fill="#fff" stroke="#aaa" stroke-width="1.500" transform="rotate(4 1217 260.500)"/>
      <path d="M1200.500 219.500l31-.500 10 9-36 1z" fill="#e2e2e2"/><path d="M1200.500 219.500l5 9v34l-5-14z" fill="#d6d6d6"/><path d="M1205.500 229.500l36-1-2 34h-34z" fill="#f0f0f0"/>
      <path d="M1205.500 229.500l36-1-2 34h-34z" stroke="#999" stroke-dasharray="6 3"/><path d="M1212 235h22v21h-22z" fill="#dde3e8" stroke="none"/>
      <g stroke="none" fill="#999" class="font-['Liberation_Sans',sans-serif]"><text x="1226" y="252" font-size="9" font-weight="bold" transform="rotate(-90 1226 252)">TOP</text><text x="1232" y="221" font-size="6" transform="rotate(180 1232 221)">FRONT</text><text x="1171" y="262" font-size="11" transform="rotate(-90 1175 258)">N</text><text x="1222" y="282" font-size="11" transform="rotate(8 1228 278)">W</text><text x="1254" y="262" font-size="11" transform="rotate(-80 1258 258)">S</text></g>
    </svg>
    <button class="mt-[16px] ml-[17px] flex h-4 w-[67px] items-center justify-center gap-1 rounded-sm bg-[#ebebf4] font-['Liberation_Sans',sans-serif] text-[10px] text-[#999]">Unnamed<svg class="h-[6px] w-[10px]" viewBox="0 0 10 6"><path d="M.500.500h9L5 5.500z" fill="none" stroke="#aaa"/></svg></button>
  </div>
</div>

<!-- Model and layout tabs -->
<nav class="relative flex h-[17px] shrink-0 items-center border-t border-[#666] bg-[#efefef] pl-[2px] text-[11px] text-black" aria-label="Layouts">
  <svg class="h-4 w-[226px] shrink-0" viewBox="2 0 226 16" fill="none" stroke="#555"><path d="M62.500 0l7 15.500h37L113 0z" fill="#fff" stroke="none"/><path d="M62.500 0l7 16M109.500 16l6-16M163.500 16l6-16M218.500 16l6-16"/><path d="M16.500 0v16M46.500 0v16M62.500 0v16M31.500 0v16" stroke="#bbb"/><path d="M6.500 4v8M57.500 4v8"/><path d="M13 4v8L8 8zM36 4v8l5-4zM51 4v8l5-4z" fill="#777" stroke="none"/></svg>
  <div class="absolute inset-y-0 left-[63px] flex items-center [&>a]:text-center"><a href="#" class="w-[50px]">Model</a><a href="#" class="w-[51px]">Layout1</a><a href="#" class="w-[60px]">Layout2</a></div>
</nav>
<div class="h-[5px] shrink-0 border-t border-[#ddd] bg-[#686868]"></div>

<!-- Command line -->
<div class="flex h-[59px] shrink-0 bg-black font-['Liberation_Mono',monospace] text-[13px] text-white">
  <div class="w-4 shrink-0 rounded-l-md bg-[#9b9b9b] pt-[2px] pl-[2px]"><svg class="h-[5px] w-3" viewBox="0 0 12 5"><path d="M0 .500h12M0 3.500h12" stroke="#222" stroke-dasharray="1 1"/></svg></div>
  <div class="flex flex-1 flex-col">
    <div class="flex h-10">
      <div class="flex-1 pt-px pl-[2px] whitespace-pre">Command:
Command: _.erase 2 found</div>
      <div class="flex w-[17px] flex-col items-center justify-between bg-[#f0f0f0] py-2"><svg class="h-[3px] w-[5px] rotate-180"><use href="#tiny"/></svg><svg class="h-[3px] w-[5px]"><use href="#tiny"/></svg></div>
    </div>
    <div class="flex h-[19px] border-t border-[#999]">
      <label class="pt-px pl-[2px] leading-5" for="cmd">Command:</label><input id="cmd" class="min-w-0 flex-1 bg-black px-2 text-white outline-none">
      <div class="flex w-[69px] items-center justify-between bg-[#ececec] px-2"><svg class="h-[5px] w-1" viewBox="0 0 4 5"><path d="M4 0v5L0 2.500z" fill="#333"/></svg><span class="h-4 w-[15px] rounded-xs border border-[#999] bg-linear-to-b from-[#f4f4f4] to-[#d0d0d0]"></span><svg class="ml-4 h-[5px] w-1" viewBox="0 0 4 5"><path d="M0 0v5l4-2.500z" fill="#333"/></svg></div>
      <div class="w-[17px] bg-[#f0f0f0]"></div>
    </div>
  </div>
</div>

<!-- Status bar -->
<footer class="flex h-[22px] shrink-0 items-stretch border-t border-[#aaa] bg-linear-to-b from-[#989898] to-[#7c7c7c] text-black [&_button]:flex [&_button]:items-center [&_button]:justify-center [&>div]:flex [&>div]:shrink-0 [&>div]:border-l [&>div]:border-[#555] [&>div>button]:border-r [&>div>button]:border-[#555] [&>div>button]:bg-linear-to-b [&>div>button]:from-[#c8c8c8] [&>div>button]:to-[#9c9c9c]">
  <output class="w-[175px] shrink-0 pt-1 pl-3 font-['Liberation_Sans',sans-serif] text-[11px] whitespace-pre">7.7527,  -11.7060, 0.0000</output>
  <div class="fill-none stroke-[#333] [&>button]:w-[22px] [&_svg]:size-[18px]">
    <button aria-label="Snap"><svg viewBox="0 0 18 18"><path d="M3 3.500h9M3 6.500h9M3 9.500h9M3 12.500h9" stroke-dasharray="1 2"/><path d="M14.500 3v10M3 14.500h9" stroke-dasharray="6 1"/></svg></button>
    <button aria-label="Grid"><svg viewBox="0 0 18 18"><path d="M1.500 1.500h15v15h-15zM4.500 1.500v15M7.500 1.500v15M10.500 1.500v15M13.500 1.500v15M1.500 4.500h15M1.500 7.500h15M1.500 10.500h15M1.500 13.500h15" fill="#eee"/></svg></button>
    <button aria-label="Ortho"><svg viewBox="0 0 18 18"><path d="M1.500 1v14.500H17"/><path d="M2 9.500h5.500V15" stroke="#4a7898"/></svg></button>
    <button aria-label="Polar"><svg viewBox="0 0 18 18"><path d="M13 5a5 5 0 1 0 0 7"/><path d="M8 10.500h9M9 10l7-7M14.500 5v6" stroke="#111"/></svg></button>
    <button aria-label="Object snap" class="bg-[linear-gradient(#c4e8f4,#8cc4d8)]!"><svg viewBox="0 0 18 18"><path d="M3.500 4.500h12v12h-12z" fill="#f4f4f8"/><circle cx="3" cy="3" r="1.800" stroke="#e05020" fill="#fff"/></svg></button>
    <button aria-label="Object tracking"><svg viewBox="0 0 18 18"><path d="M14 3L4 14h11" stroke="#111"/></svg></button>
    <button aria-label="Dynamic UCS"><svg viewBox="0 0 18 18"><path d="M3.500 2v13.500H17M3.500 15.500L13 6M2 4l1.500-2L5 4"/><path d="M14 1l-4 5h3l-2 5 6-6h-3z" fill="#ffc040" stroke="#d07010"/></svg></button>
    <button aria-label="Dynamic input"><svg viewBox="0 0 18 18"><path d="M3 8.500h8M7.500 4v8" stroke="#111"/><path d="M9.500 9.500h6v4h-6z" fill="#eee"/></svg></button>
    <button aria-label="Lineweight"><svg viewBox="0 0 18 18"><path d="M3 9.500h5" stroke="#111"/><path d="M8 9.500h6M8.500 4v10" stroke="#111" stroke-width="2"/></svg></button>
    <button aria-label="Quick properties" class="bg-[linear-gradient(#c4e8f4,#8cc4d8)]!"><svg viewBox="0 0 18 18"><path d="M5.500 3.500h8v11h-8z" fill="#fff" stroke="#000"/><path d="M5 5h9" stroke="#000" stroke-width="2"/><path d="M7 7.500h1M9 7.500h3M7 9.500h1M9 9.500h3M7 11.500h1M9 11.500h3" stroke="#000"/></svg></button>
  </div>
  <div class="ml-auto"><button class="w-11 text-[11px]">MODEL</button>
    <button class="w-[22px]" aria-label="Model"><svg class="size-4" viewBox="0 0 16 16"><path d="M1.500 1.500h12v9h-12z" fill="#eee" stroke="#333"/><path d="M4 4v5h5zM1 13h14" fill="none" stroke="#333" stroke-width="1.500"/></svg></button>
    <button class="w-[22px]" aria-label="Quick view"><svg class="size-4" viewBox="0 0 16 16" fill="#eee" stroke="#333"><path d="M.500 2.500h7v7h-7zM8.500 2.500h7v7h-7z"/><path d="M1 12h14" stroke-width="2"/></svg></button></div>
  <div class="ml-3 [&>button]:w-[22px] [&_svg]:size-[18px]">
    <button aria-label="Pan"><svg viewBox="0 0 18 18"><path d="M1.500 8.500l3-3 3 1 5 1 1 5-4 4H7l-5-6z" fill="#f4f4f4" stroke="#444"/><path d="M3 5l5 4M5 4l5 4" stroke="#444"/><path d="M13.500 1v8M9.500 5h8" stroke="#111" stroke-width="1.300"/></svg></button>
    <button aria-label="Zoom"><svg viewBox="0 0 18 18"><circle cx="7" cy="7" r="5" fill="#e8f4f8" stroke="#555" stroke-width="1.500"/><path d="M11 11l5.500 5.500" stroke="#444" stroke-width="2.500"/></svg></button>
    <button aria-label="Steering wheel"><svg viewBox="0 0 18 18" fill="none" stroke="#444"><circle cx="9" cy="9" r="7.500" fill="#eee"/><circle cx="9" cy="9" r="3"/><path d="M4 4l3 3M14 4l-3 3M4 14l3-3M14 14l-3-3"/></svg></button>
    <button aria-label="Show motion"><svg viewBox="0 0 18 18" fill="#eee" stroke="#444"><path d="M1.500 2.500h4v3h-4zM7 2.500h4v3H7zM12.500 2.500h4v3h-4zM4.500 8.500h11v8h-11z"/><path d="M8 10.500v4l4-2z" fill="#333"/></svg></button></div>
  <div class="ml-[10px]">
    <button class="w-[52px] gap-[2px] font-['Liberation_Sans',sans-serif] text-[12px]" aria-label="Annotation scale 1:1"><svg class="size-4"><use href="#compass"/></svg>1:1<svg class="ml-[1px] h-[5px] w-2"><use href="#down"/></svg></button>
    <button class="w-[22px]" aria-label="Annotation visibility"><svg class="size-[18px]" viewBox="0 0 18 18"><use href="#compass"/><circle cx="13" cy="9" r="3" fill="#ffc850" stroke="#d08020"/><path d="M12 13h2v3h-2z" fill="#888"/></svg></button>
    <button class="w-[22px]" aria-label="Auto add scale"><svg class="size-[18px] opacity-40"><use href="#compass"/></svg></button></div>
  <div class="ml-1">
    <button class="w-9 gap-1" aria-label="Workspace"><svg class="size-[18px]" viewBox="0 0 18 18"><circle cx="9" cy="9" r="6.500" fill="none" stroke="#444" stroke-width="3" stroke-dasharray="2.500 2.600"/><circle cx="9" cy="9" r="5.500" fill="#eee" stroke="#444"/><circle cx="9" cy="9" r="2" fill="#999" stroke="#444"/></svg><svg class="h-[5px] w-2"><use href="#down"/></svg></button>
    <button class="w-[22px]" aria-label="Lock"><svg class="size-4" viewBox="0 0 16 16"><path d="M1.500 6.500h9v8h-9z" fill="#eee" stroke="#444"/><path d="M8.500 6V3c0-3 5-3 5 0v4M6 9v3" fill="none" stroke="#444" stroke-width="1.300"/></svg></button></div>
  <div class="ml-1"><button class="w-[11px]" aria-label="Status menu"><svg class="h-[3px] w-[5px]"><use href="#tiny"/></svg></button><button class="w-[22px]" aria-label="Clean screen"><svg class="size-4" viewBox="0 0 16 16"><path d="M1.500 1.500h13v12h-13z" fill="#f4f4f4" stroke="#444"/><path d="M2 3h12" stroke="#888" stroke-width="2"/></svg></button></div>
</footer>

<!-- Windows taskbar -->
<footer class="flex h-10 shrink-0 border-t border-[#17487a] text-white [background-image:linear-gradient(90deg,#1f649e,#2f8ac8_15%,#3d99d2_35%,#2b80c6_45%,#2272c0_68%,#1c5fa4_72%,#174a80_78%,#123a66)] [&_button]:flex [&_button]:items-center [&_button]:justify-center">
  <button class="w-[58px] pr-1" aria-label="Start"><svg class="size-[38px]" viewBox="0 0 38 38"><circle cx="19" cy="19" r="17.500" fill="url(#gOrb)" stroke="#0c3860"/><path d="M10 12c3-2 6-2 8 0l-2 7c-3-2-5-1-8 0z" fill="#f06a28"/><path d="M20 12c3 2 5 2 9 0l-2 7c-3 2-6 1-9 0z" fill="#8cc83c"/><path d="M8 21c3-2 5-2 8 0l-2 7c-2-2-5-1-8-1z" fill="#4a9ce4"/><path d="M17 21c3 1 6 2 9 0l-2 7c-3 1-6 1-9 0z" fill="#fcd03c"/></svg></button>
  <div class="flex [&>button]:m-[1px] [&>button]:w-[60px] [&_svg]:size-8">
    <button aria-label="Explorer"><svg viewBox="0 0 32 32"><path d="M1 2h10l2 3h17v25H1z" fill="#e8c860"/><path d="M4 5h24v6H4z" fill="#fff"/><path d="M5 3h3v2H5z" fill="#18a018"/><path d="M12 5h4v2h-4z" fill="#e03020"/><path d="M20 7h4v2h-4z" fill="#30a0e0"/><path d="M1 9h30v18H1z" fill="#f8e498"/><path d="M5 30V20c0-4 23-4 23 0v10h-4v-8H9v8z" fill="#a8d4ec" stroke="#7ab4d4"/></svg></button>
    <button aria-label="Media player"><svg viewBox="0 0 32 32"><path d="M2 4h20v23H2z" fill="#b4d4e4"/><path d="M23 4h2v23h-2zM26 5h2v22h-2z" fill="#8cc0e0"/><circle cx="12" cy="16" r="9" fill="#f07820" stroke="#fff"/><path d="M9 11v10l8-5z" fill="#fff"/></svg></button>
    <button aria-label="VPS"><svg viewBox="0 0 32 32"><rect width="32" height="32" rx="3" fill="#123c9c"/><path d="M0 3a3 3 0 0 1 3-3h26L0 20z" fill="#1c68d0"/><path d="M13 5c4-3 7-1 6 4 2 3 1 6-1 10l4-1 2-3v3l3-1-2 3h3l-4 2-6 2h-4l1 4h4l1 2h-8l-2-5-5 4-3-2 4-4H4l7-6-1-6 4-3z" fill="#fff"/></svg></button>
    <button aria-label="HP"><svg viewBox="0 0 32 32"><path d="M0 7l5-6 2 6z" fill="#5880a8"/><path d="M24 7l2-6 6 6z" fill="#48b058"/><path d="M0 25l7 1-4 6z" fill="#d83040"/><path d="M32 27l-6 4-1-6z" fill="#e0a020"/><circle cx="16" cy="16" r="12" fill="#202020" stroke="#666"/><text x="8" y="21" font-family="Liberation Sans" font-size="15" font-style="italic" font-weight="bold" fill="#ddd">hp</text></svg></button>
    <button aria-label="Camera sync"><svg viewBox="0 0 32 32"><circle cx="16" cy="15" r="14" fill="#48a8e8"/><path d="M3 16C3 6 13 2 21 6l2-3 4 9h-9l2-3C14 6 8 9 7 16zM29 15c1 9-9 14-17 10l-2 3-3-8h9l-2 2c5 2 10-1 11-7z" fill="#f0f8ff"/><path d="M8 20h18v10H8z" fill="#404040"/><path d="M8 22l4 3-4 4zM26 19h5v11h-5z" fill="#282828"/><path d="M27 21h3v7h-3z" fill="#e01818"/></svg></button>
    <button aria-label="Excel"><svg viewBox="0 0 32 32"><path d="M7 1h19v26H2V6z" fill="#e4f4d8" stroke="#48a038" stroke-width="2"/><path d="M13 8l18 1-2 21-20-1z" fill="#f8fcf4" stroke="#a8d098"/><path d="M12 21h5v4h-5zM19 21h4v4h-4zM25 22h4v4h-4zM24 11h4v3h-4zM24 16h4v3h-4z" fill="#70b060"/><path d="M6 6h5l3 5 5-5h4l-7 7 4 7h-5l-3-4-4 4H4l6-7z" fill="#1c7830"/></svg></button>
    <button aria-label="Favorites star"><svg viewBox="0 0 32 32"><path d="M27 8c8 10-6 22-23 20M25 11c6 8-8 14-20 13M29 14c0 8-12 14-22 16" fill="none" stroke="#c0dcf4" stroke-width="2.500"/><path d="M11 1l3 7 8 1-5 6 2 7-8-3-7 3 1-8-5-5 8-2z" fill="#fcb828" stroke="#d88c10"/></svg></button>
    <button aria-label="Chrome" class="rounded-xs border border-[#cfe6f8] bg-linear-to-b from-white/50 to-white/15"><svg viewBox="0 0 32 32"><circle cx="16" cy="16" r="14" fill="#f8c818"/><path d="M16 16L3.900 9A14 14 0 0 1 28 9H16z" fill="#d83828"/><path d="M4 9A14 14 0 0 0 16 30l6-10-12 0z" fill="#3ca048"/><circle cx="16" cy="16" r="6.500" fill="#fff"/><circle cx="16" cy="16" r="5" fill="#2868c0"/></svg></button>
    <button aria-label="Firefox"><svg viewBox="0 0 32 32"><circle cx="17" cy="15" r="13" fill="#1c5ca8"/><path d="M17 3c7 1 9 5 9 9-3-3-6 2-10-1-1-3-4-5 1-8z" fill="#48b0e4"/><path d="M4 5l4 4c3-2 6-1 8 1-3 1-3 3-1 4l3 1c-3 1-4 3-6 3 3 5 12 4 14-3 1-5-1-9-3-12 7 4 9 12 7 18C25 33 5 33 2 19 1 13 2 9 4 5z" fill="#e86418"/><path d="M27 6c5 7 4 15-2 20 4-6 4-14 2-20z" fill="#fccc30"/></svg></button>
    <button aria-label="AutoCAD" class="rounded-xs border border-white bg-linear-to-b from-white/80 to-white/40"><svg viewBox="0 0 32 32"><path d="M2.500 8.500h28v22h-28z" fill="#f8f8f8" stroke="#999"/><use href="#redA" x="3" y="0" width="19" height="24"/><g font-family="Liberation Sans" font-size="8" font-weight="bold" fill="#c01820"><text x="21" y="16">20</text><text x="21" y="23">10</text></g></svg></button>
    <button aria-label="Paint"><svg viewBox="0 0 32 32"><path d="M2 20C2 10 12 4 20 6c9 1 11 10 6 17-3 6-14 8-16 5-1-3 2-5 0-6-3-1-8 2-8-2z" fill="#d4ecf8" stroke="#88b8d8"/><circle cx="7" cy="17" r="2.500" fill="#e04848"/><circle cx="11" cy="12" r="2.500" fill="#48a848"/><circle cx="18" cy="9" r="3" fill="#f0c030"/><circle cx="14" cy="20" r="2.500" fill="#2870c0"/><path d="M26 6l-8 24" stroke="#e08828" stroke-width="3"/><path d="M25 6l5-6 2 2-3 7z" fill="#c8a070"/></svg></button>
  </div>
  <div class="flex flex-1 items-center justify-end">
    <span class="mr-[11px] mb-[6px] text-[11px]">EN</span>
    <div class="flex [&>button]:w-6 [&_svg]:size-4">
      <button aria-label="Volume"><svg viewBox="0 0 16 16"><path d="M1 5h3l3-4v14l-3-4H1z" fill="#fff"/><path d="M9 6c1 1 1 3 0 4M11 4c2 2 2 6 0 8M13 3c3 3 3 7 0 10" fill="none" stroke="#fff"/></svg></button>
      <button aria-label="Bluetooth"><svg viewBox="0 0 16 16"><ellipse cx="8" cy="8" rx="5.500" ry="7.500" fill="#1a48a0"/><path d="M5 5l6 6-3 3V2l3 3-6 6" fill="none" stroke="#fff" stroke-width="1.300"/></svg></button>
      <button aria-label="Download manager"><svg viewBox="0 0 16 16"><circle cx="9" cy="7" r="6" fill="#3878b8"/><path d="M3 4c4-4 8-3 11 0l-7 3z" fill="#f0d840"/><path d="M1 8l8-2-1 3h7l-4 6-5-3z" fill="#28a038"/></svg></button>
      <button aria-label="Window tool"><svg viewBox="0 0 16 16"><path d="M3 2h12v10H3z" fill="#f0f0f0" stroke="#f09030"/><path d="M5 4h4v3H5z" fill="#f07030"/><path d="M10 4h3v3h-3z" fill="#50b040"/><path d="M1 8h9v7H1z" fill="#b0d8f4" stroke="#3878b8"/></svg></button>
      <button aria-label="Dropbox"><svg viewBox="0 0 16 16"><path d="M4 1l4 3 4-3 4 3-4 3 4 3-4 4-4-3-4 3-4-4 4-3-4-3z" fill="#78c0f0"/><circle cx="12" cy="12" r="4" fill="#30a040"/><path d="M10 12l2 2 3-4" fill="none" stroke="#fff"/></svg></button>
      <button aria-label="Update"><svg viewBox="0 0 16 16"><path d="M1 5h8V0l4 2v3h2v11H1z" fill="#18a828"/><path d="M4 10l3 3 6-7" fill="none" stroke="#fff" stroke-width="2"/></svg></button>
      <button aria-label="Action center"><svg viewBox="0 0 16 16"><path d="M1 1h1v14H1z" fill="#fff"/><path d="M3 2h6v2h6l-2 3 2 3H8V8H3z" fill="#fff"/></svg></button>
      <button aria-label="Power"><svg viewBox="0 0 16 16"><path d="M2 2h8v13H2zM4 1h4" fill="none" stroke="#fff" stroke-width="1.500"/><path d="M6.500 5.500h9v3l-2 2.500h-1.500V15h-2v-4H8.500l-2-2.500z" fill="#fff" stroke="#234"/><path d="M9 2v4M13 2v4" stroke="#fff" stroke-width="1.500"/></svg></button>
      <button aria-label="Network"><svg viewBox="0 0 16 16"><path d="M1 12h2v3H1zM4 10h2v5H4zM7 8h2v7H7zM10 5h2v10h-2zM13 2h2v13h-2z" fill="#fff"/></svg></button>
    </div>
    <time class="w-[86px] pl-[2px] text-center text-[12px] leading-[17px]">9:04 AM<br>07-Dec-14</time>
    <button class="h-full w-[13px] border border-[#7a98b8] bg-white/10" aria-label="Show desktop"></button>
  </div>
</footer>

<!-- Collapsed palette -->
<aside class="absolute top-[160px] bottom-[69px] left-3 flex w-[22px] flex-col items-center rounded-t-sm border border-[#333] bg-[#cbcbcb] pt-[5px] pb-[2px] text-black">
  <div class="flex flex-col items-center gap-2 pl-[2px] [&_svg]:block">
    <button aria-label="Close palette"><svg class="h-[10px] w-[10px]" viewBox="0 0 10 10"><path d="M1 1l8 8M9 1L1 9" stroke="#000" stroke-width="2"/></svg></button>
    <button aria-label="Auto-hide"><svg class="h-3 w-[11px]" viewBox="0 0 11 12"><path d="M0 0h2v11H0zM3 0h7v11H3z"/><path d="M5 2v7l4-3.500z" fill="#ddd"/></svg></button>
    <button aria-label="Palette properties"><svg class="h-[11px] w-3" viewBox="0 0 12 11"><path d="M0 0h12v2H0zM0 3h12v8H0z"/><path d="M5 4h6v6H5z" fill="#ddd"/><path d="M6 5.500h4M6 8h4" stroke="#000"/></svg></button>
  </div>
  <span class="mt-auto mb-2 rotate-180 text-[11px] whitespace-nowrap [writing-mode:vertical-rl]">Visual Styles Manager</span>
  <svg class="h-[18px] w-[17px] shrink-0" viewBox="0 0 17 18"><circle cx="8" cy="8" r="7.500" fill="#eee" stroke="#555"/><path d="M2 4c4 1 9 5 12 10M8 1C5 5 4 10 7 15" fill="none" stroke="#aaa"/><path d="M7.500 9.500h9v7h-9z" fill="#fff" stroke="#335"/><path d="M9 11.500h2M12 11.500h3M9 14.500h2M12 14.500h3" stroke="#357"/></svg>
</aside>
</body>
</html>
